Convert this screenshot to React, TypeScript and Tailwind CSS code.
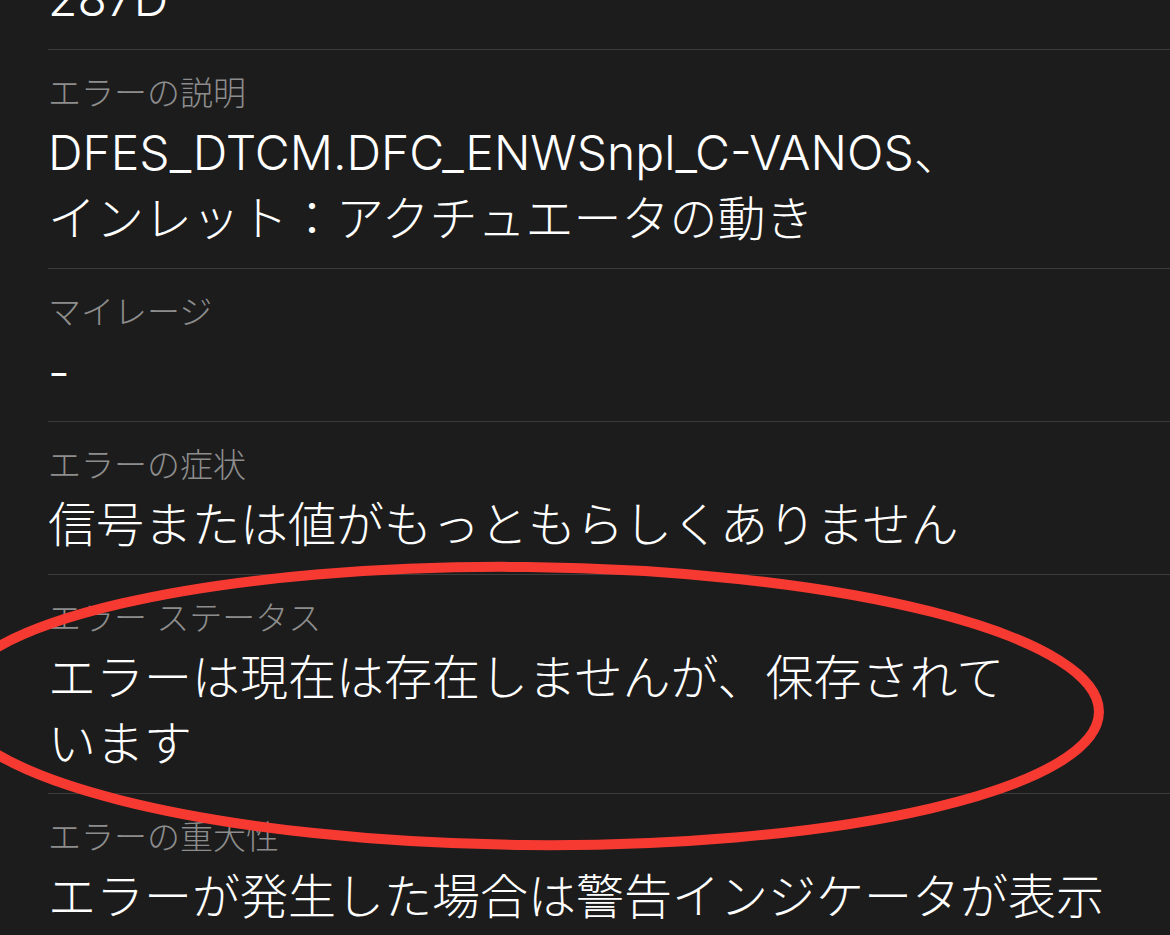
import React from 'react';

type Field = {
  label: string;
  value: string;
};

const fields: Field[] = [
  { label: 'エラーの説明', value: 'DFES_DTCM.DFC_ENWSnpl_C-VANOS、\nインレット：アクチュエータの動き' },
  { label: 'マイレージ', value: '-' },
  { label: 'エラーの症状', value: '信号または値がもっともらしくありません' },
  { label: 'エラー ステータス', value: 'エラーは現在は存在しませんが、保存されて\nいます' },
  { label: 'エラーの重大性', value: 'エラーが発生した場合は警告インジケータが表示されます' },
];

const Row: React.FC<Field> = ({ label, value }) => (
  <div className="border-t border-[#3a3a3a] pt-[23px] pb-[16px] pr-[50px]">
    <div className="text-[33px] leading-[40px] text-[#8d8d8d]">{label}</div>
    <div className="mt-[7px] text-[48px] leading-[66px] text-white whitespace-pre-line">{value}</div>
  </div>
);

export default function App() {
  return (
    <div
      className="relative h-[935px] w-full overflow-hidden bg-[#1c1c1c] font-light"
      style={{ fontFamily: 'Inter, "Noto Sans CJK JP", sans-serif' }}
    >
      <div className="pl-[48px]">
        {/* tail of the previous field, cut by the top edge */}
        <div className="-mt-[34px] pb-[17px] text-[48px] leading-[66px] text-white">287D</div>
        {fields.map((f) => (
          <Row key={f.label} label={f.label} value={f.value} />
        ))}
      </div>

      {/* red hand-drawn annotation */}
      <svg className="pointer-events-none absolute inset-0" width="1170" height="935" viewBox="0 0 1170 935">
        <ellipse
          cx="526"
          cy="706"
          rx="573"
          ry="139"
          fill="none"
          stroke="#f63a32"
          strokeWidth="10"
          transform="rotate(0.6 526 706)"
        />
      </svg>
    </div>
  );
}
